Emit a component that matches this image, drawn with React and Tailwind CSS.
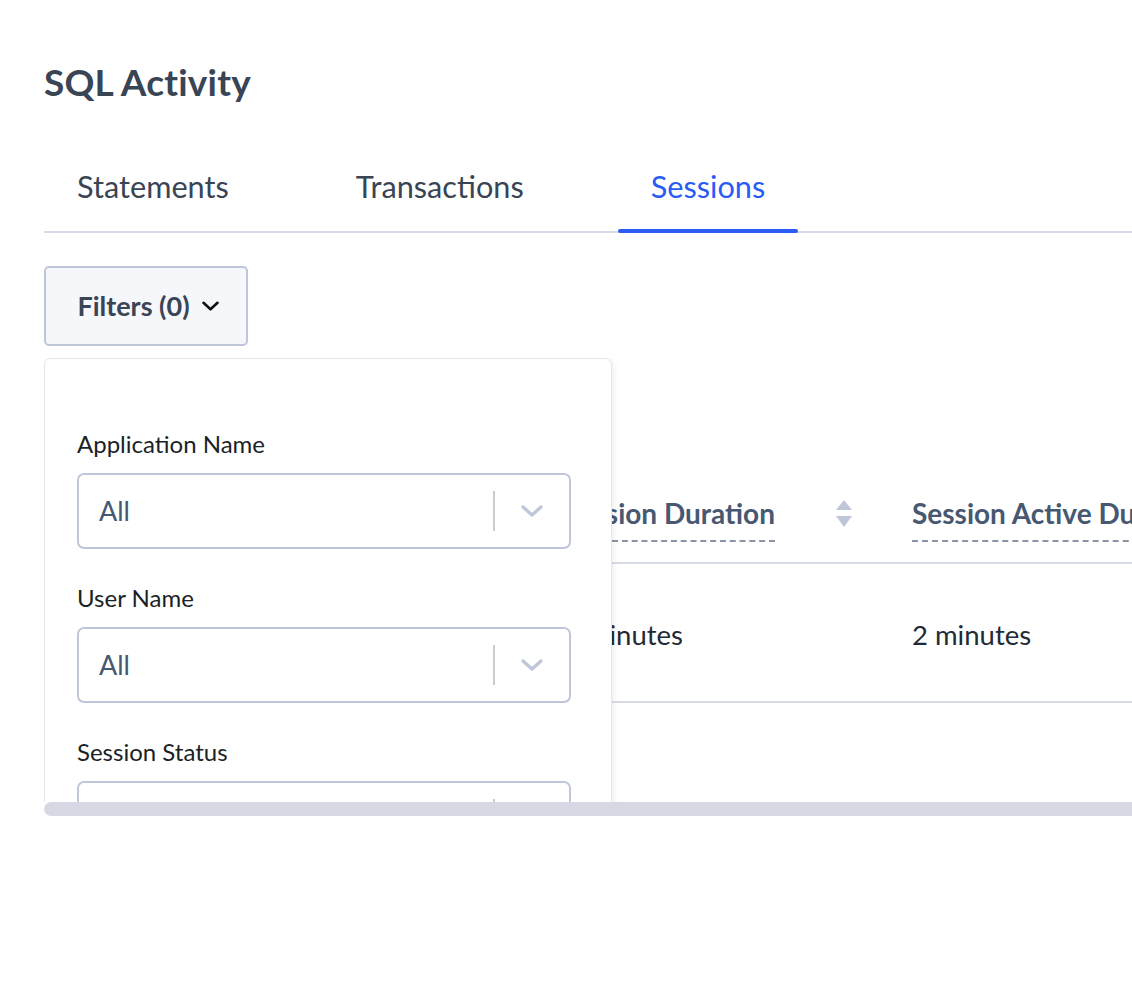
import React from "react";

function Chevron({ className }) {
  return (
    <svg className={className} width="17" height="10" viewBox="0 0 17 10" fill="none">
      <path d="M1.5 1.8 L8.5 8.3 L15.5 1.8" stroke="#111" strokeWidth="2.6" strokeLinecap="round" strokeLinejoin="round" />
    </svg>
  );
}

function SelectBox({ clipped }) {
  return (
    <div className="w-[494px] h-[76px] rounded-[7px] border-2 border-[#c0c6d9] flex items-center bg-white">
      <span className="pl-[20px] flex-1 text-[27px] text-[#475872]">{clipped ? "" : "All"}</span>
      <div className="w-[2px] h-[40px] bg-[#cccccc]" />
      <div className="w-[74px] flex justify-center">
        <svg width="24" height="14" viewBox="0 0 24 14" fill="none">
          <path d="M3 3 L12 11 L21 3" stroke="#c0c6d9" strokeWidth="3.4" strokeLinecap="round" strokeLinejoin="round" />
        </svg>
      </div>
    </div>
  );
}

function SortArrows() {
  return (
    <svg width="18" height="32" viewBox="0 0 18 32" fill="none">
      <path d="M9 2 L17 12 L1 12 Z" fill="#c0c6d9" />
      <path d="M1 18 L17 18 L9 29 Z" fill="#c0c6d9" />
    </svg>
  );
}

export default function App() {
  return (
    <div className="w-[1132px] h-[994px] overflow-hidden bg-white font-[Lato,sans-serif]">
      <div className="pl-[44px] w-[1500px]">
        <h1 className="pt-[60px] text-[37px] leading-[44px] font-bold text-[#394455] tracking-[0.2px]">
          SQL Activity
        </h1>

        <div className="mt-[36px] flex gap-[61px] border-b-2 border-[#d6dbe7] w-[1088px]">
          <div className="px-[33px] h-[91px] pt-[3px] flex items-center text-[30.7px] text-[#394455]">Statements</div>
          <div className="px-[33px] h-[91px] pt-[3px] flex items-center text-[30.7px] text-[#394455]">Transactions</div>
          <div className="relative px-[33px] h-[91px] pt-[3px] flex items-center text-[30.7px] text-[#2a5bf5]">
            Sessions
            <div className="absolute left-0 right-0 -bottom-[2px] h-[4px] rounded-full bg-[#2a5bf5]" />
          </div>
        </div>

        <button className="mt-[33px] w-[204px] h-[80px] rounded-[5px] border-2 border-[#c0c6d9] bg-[#f5f7fa] flex items-center justify-center gap-[12px] pl-[4px] text-[27px] font-bold text-[#394455]">
          <span>Filters (0)</span>
          <Chevron />
        </button>

        <div className="relative mt-[12px] h-[444px] w-[1088px] overflow-hidden">
          {/* table */}
          <div className="absolute left-0 top-[113px] w-[1400px] text-[#242a35]">
            <div className="flex items-center h-[93px] border-b-2 border-[#d6dbe7] text-[28px] font-bold text-[#475872]">
              <div className="w-[519px] flex">
                <span className="pl-[33px]">Session Start Time (UTC)</span>
              </div>
              <div className="w-[349px] flex items-center">
                <div className="w-[212px] flex justify-end">
                  <span className="border-b-2 border-dashed border-[#8a94a6] pb-[6px] whitespace-nowrap">Session Duration</span>
                </div>
                <div className="ml-[60px] -mt-[6px]">
                  <SortArrows />
                </div>
              </div>
              <div className="w-[500px] flex">
                <span className="border-b-2 border-dashed border-[#8a94a6] pb-[6px] whitespace-nowrap">Session Active Duration</span>
              </div>
            </div>
            <div className="flex items-center h-[139px] pt-[4px] border-b-2 border-[#d6dbe7] text-[27.5px]">
              <div className="w-[519px] pl-[33px]">Mar 14, 2024 at 10:21 UTC</div>
              <div className="w-[349px] flex">
                <div className="w-[120px] flex justify-end whitespace-nowrap">2 minutes</div>
              </div>
              <div className="w-[500px] whitespace-nowrap">2 minutes</div>
            </div>
          </div>

          {/* filter panel */}
          <div className="absolute left-0 top-0 w-[568px] h-[520px] bg-white rounded-[7px] border border-[#e3e6ec] shadow-[0_2px_8px_rgba(0,0,0,0.10)] pl-[32px] pt-[70px]">
            <div className="text-[24px] leading-[30px] text-[#1b1f26]">Application Name</div>
            <div className="mt-[14px]"><SelectBox /></div>
            <div className="mt-[34px] text-[24px] leading-[30px] text-[#1b1f26]">User Name</div>
            <div className="mt-[14px]"><SelectBox /></div>
            <div className="mt-[34px] text-[24px] leading-[30px] text-[#1b1f26]">Session Status</div>
            <div className="mt-[14px]"><SelectBox clipped /></div>
          </div>
        </div>

        <div className="h-[14px] w-[1200px] rounded-full bg-[#d6d9e4]" />
      </div>
    </div>
  );
}
